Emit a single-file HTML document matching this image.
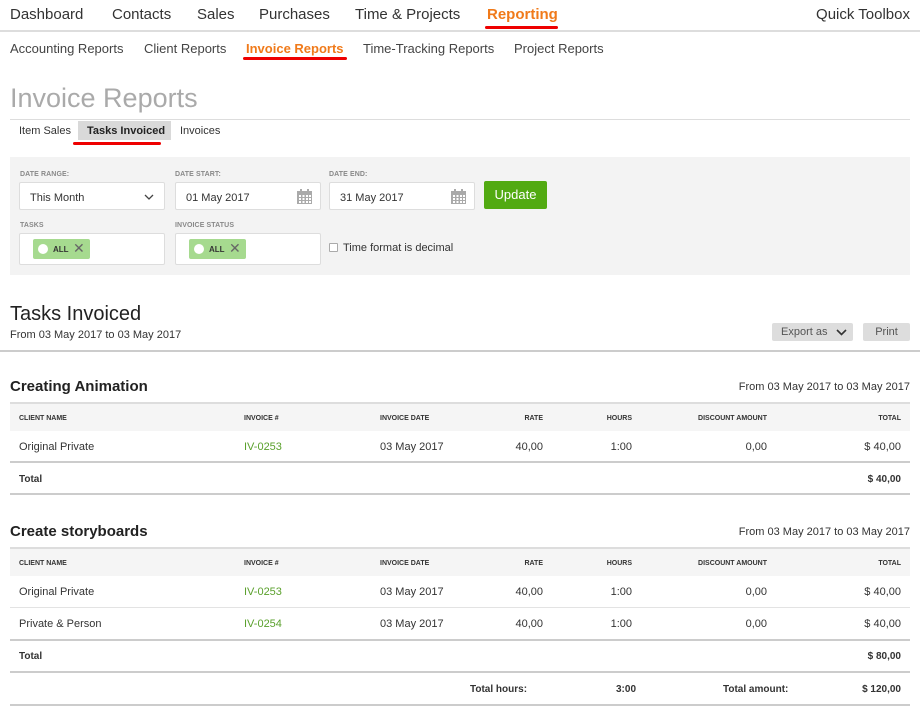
<!DOCTYPE html>
<html><head><meta charset="utf-8"><style>
*{margin:0;padding:0;box-sizing:border-box}
body{width:920px;height:718px;background:#fff;font-family:"Liberation Sans",Arial,sans-serif;color:#333;position:relative;overflow:hidden}
.a{position:absolute;white-space:nowrap}
.nav{font-size:15px;color:#333;top:6px}
.sub{font-size:13px;color:#444;top:41px}
.lbl{font-size:7px;font-weight:bold;color:#888;letter-spacing:.1px}
.inp{position:absolute;background:#fff;border:1px solid #ddd;border-radius:2px;font-size:11px;color:#333}
.chip{position:absolute;background:#a6da8f;border-radius:2px;width:57px;height:20px;top:5px;left:13px}
.chip i{position:absolute;left:5px;top:5px;width:10px;height:10px;border-radius:50%;background:#fff}
.chip b{position:absolute;left:20px;top:6px;font-size:8px}
.chip s{position:absolute;left:40px;top:1px;font-size:14px;text-decoration:none;color:#666;font-weight:normal}
.h2{font-size:15px;font-weight:bold;color:#222;left:10px}
.rd{font-size:11px;right:10px;color:#333}
.th{position:absolute;left:10px;width:900px;height:29px;background:#f5f5f5;border-top:2px solid #ddd}
.th span{position:absolute;top:11px;font-size:7px;font-weight:bold;color:#333}
.row span{position:absolute;font-size:11px}
.line{position:absolute;left:10px;width:900px;height:2px;background:#ccc}
.thin{position:absolute;left:10px;width:900px;height:1px;background:#e3e3e3}
.g{color:#5aa02c}
.b{font-weight:bold;font-size:10px!important}
</style></head><body>
<div class="a nav" style="left:10px">Dashboard</div>
<div class="a nav" style="left:112px">Contacts</div>
<div class="a nav" style="left:197px">Sales</div>
<div class="a nav" style="left:259px">Purchases</div>
<div class="a nav" style="left:355px">Time &amp; Projects</div>
<div class="a nav" style="left:487px;color:#f07a1a;font-weight:bold">Reporting</div>
<div class="a nav" style="right:10px">Quick Toolbox</div>
<div class="a" style="left:485px;top:26px;width:73px;height:3px;background:#e00;border-radius:2px"></div>
<div class="a" style="left:0;top:30px;width:920px;height:2px;background:#ddd"></div>
<div class="a sub" style="left:10px">Accounting Reports</div>
<div class="a sub" style="left:144px">Client Reports</div>
<div class="a sub" style="left:246px;color:#f07a1a;font-weight:bold">Invoice Reports</div>
<div class="a sub" style="left:363px">Time-Tracking Reports</div>
<div class="a sub" style="left:514px">Project Reports</div>
<div class="a" style="left:243px;top:57px;width:104px;height:3px;background:#e00;border-radius:2px"></div>
<div class="a" style="left:10px;top:83px;font-size:27px;color:#aaa">Invoice Reports</div>
<div class="a" style="left:10px;top:119px;width:900px;height:1px;background:#ddd"></div>
<div class="a" style="left:19px;top:125px;font-size:11px">Item Sales</div>
<div class="a" style="left:78px;top:121px;width:93px;height:19px;background:#d9d9d9"></div>
<div class="a" style="left:87px;top:125px;font-size:11px;font-weight:bold;color:#222">Tasks Invoiced</div>
<div class="a" style="left:180px;top:125px;font-size:11px">Invoices</div>
<div class="a" style="left:73px;top:142px;width:88px;height:3px;background:#e00;border-radius:2px"></div>

<div class="a" style="left:10px;top:157px;width:900px;height:118px;background:#f3f3f3"></div>
<div class="a lbl" style="left:20px;top:171px">DATE RANGE:</div>
<div class="a lbl" style="left:175px;top:171px">DATE START:</div>
<div class="a lbl" style="left:329px;top:171px">DATE END:</div>
<div class="inp" style="left:19px;top:182px;width:146px;height:28px"><span class="a" style="left:10px;top:9px">This Month</span><svg class="a" style="right:10px;top:11px" width="10" height="6" viewBox="0 0 10 6"><path d="M1 1L5 5L9 1" fill="none" stroke="#444" stroke-width="1.3"/></svg></div>
<div class="inp" style="left:175px;top:182px;width:146px;height:28px"><span class="a" style="left:10px;top:9px">01 May 2017</span>
<svg class="a" style="right:7px;top:5px" width="17" height="17" viewBox="0 0 17 17"><rect x="1" y="3" width="15" height="13" fill="#aaa"/><g fill="#fff"><rect x="3" y="7" width="2" height="2"/><rect x="6.5" y="7" width="2" height="2"/><rect x="10" y="7" width="2" height="2"/><rect x="13" y="7" width="2" height="2"/><rect x="3" y="10" width="2" height="2"/><rect x="6.5" y="10" width="2" height="2"/><rect x="10" y="10" width="2" height="2"/><rect x="13" y="10" width="2" height="2"/><rect x="3" y="13" width="2" height="2"/><rect x="6.5" y="13" width="2" height="2"/><rect x="10" y="13" width="2" height="2"/><rect x="13" y="13" width="2" height="2"/></g><rect x="4" y="1" width="2" height="4" fill="#aaa"/><rect x="11" y="1" width="2" height="4" fill="#aaa"/></svg></div>
<div class="inp" style="left:329px;top:182px;width:146px;height:28px"><span class="a" style="left:10px;top:9px">31 May 2017</span>
<svg class="a" style="right:7px;top:5px" width="17" height="17" viewBox="0 0 17 17"><rect x="1" y="3" width="15" height="13" fill="#aaa"/><g fill="#fff"><rect x="3" y="7" width="2" height="2"/><rect x="6.5" y="7" width="2" height="2"/><rect x="10" y="7" width="2" height="2"/><rect x="13" y="7" width="2" height="2"/><rect x="3" y="10" width="2" height="2"/><rect x="6.5" y="10" width="2" height="2"/><rect x="10" y="10" width="2" height="2"/><rect x="13" y="10" width="2" height="2"/><rect x="3" y="13" width="2" height="2"/><rect x="6.5" y="13" width="2" height="2"/><rect x="10" y="13" width="2" height="2"/><rect x="13" y="13" width="2" height="2"/></g><rect x="4" y="1" width="2" height="4" fill="#aaa"/><rect x="11" y="1" width="2" height="4" fill="#aaa"/></svg></div>
<div class="a" style="left:484px;top:181px;width:63px;height:28px;background:#52aa12;border-radius:2px;color:#fff;font-size:13px;text-align:center;line-height:28px">Update</div>
<div class="a lbl" style="left:20px;top:222px">TASKS</div>
<div class="a lbl" style="left:175px;top:222px">INVOICE STATUS</div>
<div class="inp" style="left:19px;top:233px;width:146px;height:32px"><div class="chip"><i></i><b>ALL</b><s>✕</s></div></div>
<div class="inp" style="left:175px;top:233px;width:146px;height:32px"><div class="chip"><i></i><b>ALL</b><s>✕</s></div></div>
<div class="a" style="left:329px;top:243px;width:9px;height:9px;border:1px solid #aaa;background:#fff;border-radius:1px"></div>
<div class="a" style="left:343px;top:242px;font-size:11px">Time format is decimal</div>

<div class="a" style="left:10px;top:303px;font-size:20px;color:#222">Tasks Invoiced</div>
<div class="a" style="left:10px;top:329px;font-size:11px">From 03 May 2017 to 03 May 2017</div>
<div class="a" style="left:772px;top:323px;width:81px;height:18px;background:#ddd;border-radius:2px;font-size:11px;color:#555;padding:3px 0 0 9px">Export as<svg style="position:absolute;left:64px;top:6px" width="11" height="7" viewBox="0 0 11 7"><path d="M1 1L5.5 5.5L10 1" fill="none" stroke="#333" stroke-width="1.6"/></svg></div>
<div class="a" style="left:863px;top:323px;width:47px;height:18px;background:#ddd;border-radius:2px;font-size:11px;color:#555;text-align:center;line-height:18px">Print</div>
<div class="a" style="left:0;top:350px;width:920px;height:2px;background:#ccc"></div>

<!-- Section 1 -->
<div class="a h2" style="top:378px">Creating Animation</div>
<div class="a rd" style="top:381px">From 03 May 2017 to 03 May 2017</div>
<div class="th" style="top:402px"><span style="left:9px">CLIENT NAME</span><span style="left:234px">INVOICE #</span><span style="left:370px">INVOICE DATE</span><span style="right:367px">RATE</span><span style="right:278px">HOURS</span><span style="right:143px">DISCOUNT AMOUNT</span><span style="right:9px">TOTAL</span></div>
<div class="row"><span style="left:19px;top:441px">Original Private</span><span class="g" style="left:244px;top:441px">IV-0253</span><span style="left:380px;top:441px">03 May 2017</span><span style="right:377px;top:441px">40,00</span><span style="right:288px;top:441px">1:00</span><span style="right:153px;top:441px">0,00</span><span style="right:19px;top:441px">$ 40,00</span></div>
<div class="line" style="top:461px"></div>
<div class="row"><span class="b" style="left:19px;top:474px">Total</span><span class="b" style="right:19px;top:474px">$ 40,00</span></div>
<div class="line" style="top:493px"></div>

<!-- Section 2 -->
<div class="a h2" style="top:523px">Create storyboards</div>
<div class="a rd" style="top:526px">From 03 May 2017 to 03 May 2017</div>
<div class="th" style="top:547px"><span style="left:9px">CLIENT NAME</span><span style="left:234px">INVOICE #</span><span style="left:370px">INVOICE DATE</span><span style="right:367px">RATE</span><span style="right:278px">HOURS</span><span style="right:143px">DISCOUNT AMOUNT</span><span style="right:9px">TOTAL</span></div>
<div class="row"><span style="left:19px;top:586px">Original Private</span><span class="g" style="left:244px;top:586px">IV-0253</span><span style="left:380px;top:586px">03 May 2017</span><span style="right:377px;top:586px">40,00</span><span style="right:288px;top:586px">1:00</span><span style="right:153px;top:586px">0,00</span><span style="right:19px;top:586px">$ 40,00</span></div>
<div class="thin" style="top:607px"></div>
<div class="row"><span style="left:19px;top:618px">Private &amp; Person</span><span class="g" style="left:244px;top:618px">IV-0254</span><span style="left:380px;top:618px">03 May 2017</span><span style="right:377px;top:618px">40,00</span><span style="right:288px;top:618px">1:00</span><span style="right:153px;top:618px">0,00</span><span style="right:19px;top:618px">$ 40,00</span></div>
<div class="line" style="top:639px"></div>
<div class="row"><span class="b" style="left:19px;top:651px">Total</span><span class="b" style="right:19px;top:651px">$ 80,00</span></div>
<div class="line" style="top:671px"></div>
<div class="row"><span class="b" style="left:470px;top:684px">Total hours:</span><span class="b" style="left:616px;top:684px">3:00</span><span class="b" style="left:723px;top:684px">Total amount:</span><span class="b" style="right:19px;top:684px">$ 120,00</span></div>
<div class="line" style="top:704px"></div>
</body></html>
